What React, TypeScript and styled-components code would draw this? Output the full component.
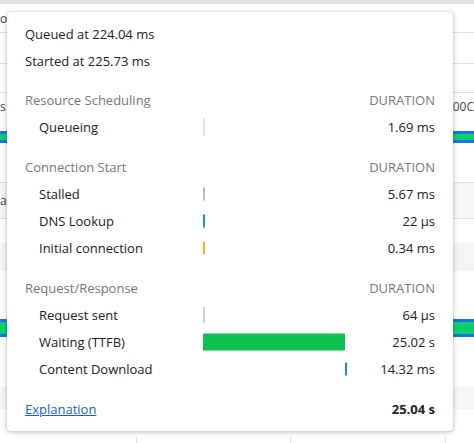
import React from "react";
import styled, { createGlobalStyle } from "styled-components";

const GlobalStyle = createGlobalStyle`
  html, body {
    margin: 0;
    padding: 0;
    background: #ffffff;
  }
  body {
    font-family: "Open Sans", "Noto Sans", sans-serif;
    -webkit-font-smoothing: antialiased;
  }
`;

interface Phase {
  label: string;
  start: number; // seconds from request start
  duration: number; // seconds
  value: string;
  color: string;
  barHeight: number;
}

interface Section {
  title: string;
  phases: Phase[];
}

const TOTAL = 25.04;

const sections: Section[] = [
  {
    title: "Resource Scheduling",
    phases: [
      { label: "Queueing", start: 0, duration: 0.00169, value: "1.69 ms", color: "#e3e3e3", barHeight: 18 },
    ],
  },
  {
    title: "Connection Start",
    phases: [
      { label: "Stalled", start: 0, duration: 0.00567, value: "5.67 ms", color: "#bcbcbc", barHeight: 13 },
      { label: "DNS Lookup", start: 0, duration: 0.000022, value: "22 µs", color: "#1f9e89", barHeight: 13 },
      { label: "Initial connection", start: 0, duration: 0.00034, value: "0.34 ms", color: "#f6a935", barHeight: 13 },
    ],
  },
  {
    title: "Request/Response",
    phases: [
      { label: "Request sent", start: 0, duration: 0.000064, value: "64 µs", color: "#cfcfcf", barHeight: 16 },
      { label: "Waiting (TTFB)", start: 0.0073, duration: 25.0, value: "25.02 s", color: "#0cc152", barHeight: 17 },
      { label: "Content Download", start: 25.0073, duration: 0.01432, value: "14.32 ms", color: "#1a8ae6", barHeight: 13 },
    ],
  },
];

/* ---------- background network panel ---------- */

const Page = styled.div`
  position: relative;
  width: 474px;
  height: 443px;
  overflow: hidden;
  background: #ffffff;
`;

const Background = styled.div`
  display: flex;
  flex-direction: column;
  width: 100%;
`;

const BgRow = styled.div<{ $h: number; $bg?: string; $line?: boolean }>`
  display: flex;
  align-items: center;
  justify-content: space-between;
  box-sizing: border-box;
  height: ${(p) => p.$h}px;
  background: ${(p) => p.$bg ?? "#ffffff"};
  border-bottom: ${(p) => (p.$line ? "1px solid #dedede" : "none")};
  font-size: 12px;
  color: #444;
`;

const BgText = styled.span`
  white-space: nowrap;
`;

const Waterfall = styled.div<{ $h: number }>`
  width: 100%;
  height: ${(p) => p.$h}px;
  box-sizing: border-box;
  background: #0cce6b;
  border-top: 3px solid #1a73e8;
  border-bottom: 3px solid #1a73e8;
`;

const BgColumns = styled.div`
  display: grid;
  grid-template-columns: 137px 154px 155px 1fr;
  height: 13px;
`;

const BgCell = styled.div`
  border-right: 1px solid #e2e2e2;
  &:last-child {
    border-right: none;
  }
`;

/* ---------- tooltip ---------- */

const Tooltip = styled.div`
  position: absolute;
  left: 7px;
  top: 12px;
  width: 446px;
  box-sizing: border-box;
  padding: 9px 18px 9px 18px;
  background: #ffffff;
  border-radius: 4px;
  box-shadow: 0 1px 5px rgba(0, 0, 0, 0.28), 0 0 1px rgba(0, 0, 0, 0.2);
  font-size: 13px;
  color: #202124;
`;

const InfoLine = styled.div`
  height: 27px;
  line-height: 27px;
`;

const Group = styled.section<{ $first?: boolean }>`
  margin-top: ${(p) => (p.$first ? 11 : 13)}px;
`;

const Grid = styled.div`
  display: grid;
  grid-template-columns: 178px 142px 1fr;
  align-items: center;
  height: 27px;
`;

const Header = styled(Grid)`
  color: #777777;
`;

const HeaderRight = styled.span`
  grid-column: 3;
  text-align: right;
`;

const Label = styled.span`
  padding-left: 14px;
  white-space: nowrap;
`;

const Track = styled.div`
  position: relative;
  height: 27px;
`;

const Bar = styled.div`
  position: absolute;
  top: 50%;
  transform: translateY(-50%);
  min-width: 2px;
`;

const Value = styled.span`
  text-align: right;
  white-space: nowrap;
`;

const Footer = styled(Grid)`
  margin-top: 13px;
`;

const Link = styled.a`
  color: #1a5fd0;
  text-decoration: underline;
  cursor: pointer;
`;

const Total = styled.span`
  grid-column: 3;
  text-align: right;
  font-weight: 700;
`;

const PhaseRow: React.FC<{ phase: Phase }> = ({ phase }) => (
  <Grid>
    <Label>{phase.label}</Label>
    <Track>
      <Bar
        style={{
          left: `${(phase.start / TOTAL) * 100}%`,
          width: `${(phase.duration / TOTAL) * 100}%`,
          height: phase.barHeight,
          background: phase.color,
        }}
      />
    </Track>
    <Value>{phase.value}</Value>
  </Grid>
);

const App: React.FC = () => {
  return (
    <>
      <GlobalStyle />
      <Page>
        <Background>
          <BgRow $h={4} $bg="#e4e4e4" />
          <BgRow $h={29} $line>
            <BgText>o</BgText>
          </BgRow>
          <BgRow $h={31} $line />
          <BgRow $h={29} $line />
          <BgRow $h={26}>
            <BgText>s</BgText>
            <BgText>400C</BgText>
          </BgRow>
          <BgRow $h={35}>
            <Waterfall $h={12} />
          </BgRow>
          <BgRow $h={29} $line />
          <BgRow $h={36} $bg="#f6f6f6" $line>
            <BgText>a</BgText>
          </BgRow>
          <BgRow $h={24} />
          <BgRow $h={28} $bg="#f5f5f5" />
          <BgRow $h={48} />
          <BgRow $h={18}>
            <Waterfall $h={18} />
          </BgRow>
          <BgRow $h={50} />
          <BgRow $h={22} $bg="#f6f6f6" />
          <BgRow $h={27} />
          <BgColumns>
            <BgCell />
            <BgCell />
            <BgCell />
            <BgCell />
          </BgColumns>
        </Background>

        <Tooltip>
          <InfoLine>Queued at 224.04 ms</InfoLine>
          <InfoLine>Started at 225.73 ms</InfoLine>

          {sections.map((section, i) => (
            <Group key={section.title} $first={i === 0}>
              <Header>
                <span>{section.title}</span>
                <HeaderRight>DURATION</HeaderRight>
              </Header>
              {section.phases.map((phase) => (
                <PhaseRow key={phase.label} phase={phase} />
              ))}
            </Group>
          ))}

          <Footer>
            <Link>Explanation</Link>
            <Total>25.04 s</Total>
          </Footer>
        </Tooltip>
      </Page>
    </>
  );
};

export default App;
